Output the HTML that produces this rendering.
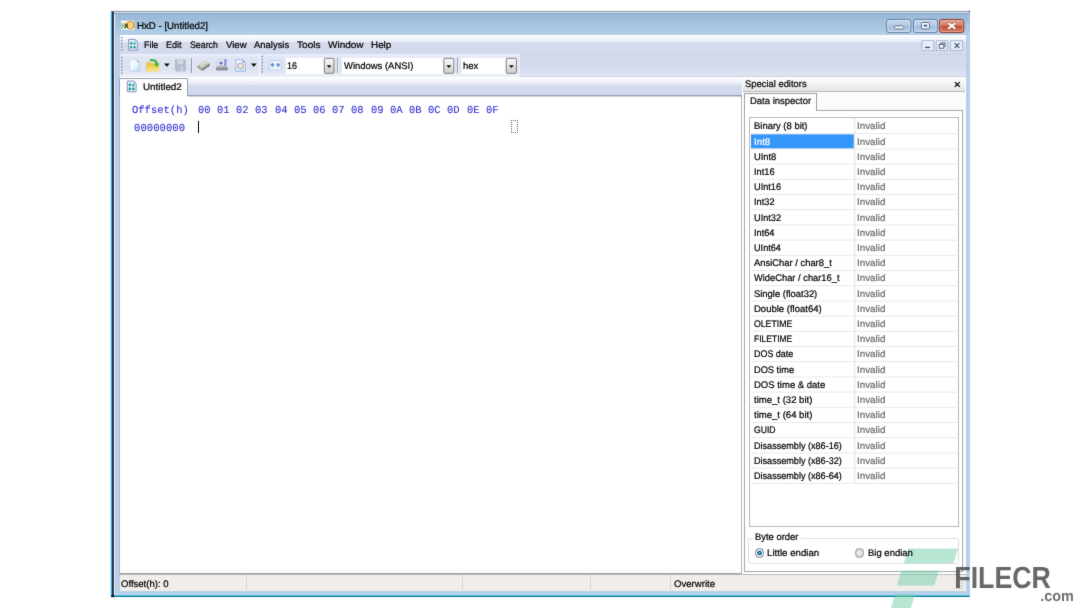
<!DOCTYPE html>
<html><head><meta charset="utf-8"><title>HxD - [Untitled2]</title>
<style>
html,body{margin:0;padding:0;}
body{width:1080px;height:608px;position:relative;overflow:hidden;background:#fff;font-family:"Liberation Sans",sans-serif;font-size:9.6px;}
#root{position:absolute;left:0;top:0;width:1080px;height:608px;filter:url(#soft);}
.a{position:absolute;box-sizing:border-box;}
.t{text-rendering:geometricPrecision;position:absolute;white-space:pre;transform-origin:0 50%;line-height:normal;-webkit-text-stroke:0.22px currentColor;}
svg{position:absolute;overflow:visible;text-rendering:geometricPrecision;}

</style></head>
<body>
<svg width="0" height="0" style="position:absolute"><filter id="soft" x="0" y="0" width="100%" height="100%" color-interpolation-filters="sRGB"><feConvolveMatrix order="3" kernelMatrix="0.012 0.068 0.012 0.068 0.68 0.068 0.012 0.068 0.012" divisor="1" edgeMode="duplicate" preserveAlpha="false"/></filter></svg>
<div id="root">
<!-- window frame -->
<div class="a" id="frame" style="left:111px;top:11px;width:858.6px;height:586px;background:#b7d0ea;"></div>
<div class="a" id="titlebar" style="left:114px;top:14px;width:855.6px;height:21px;background:linear-gradient(#99b8d7,#b3cfe8);"></div>
<!-- client -->
<div class="a" id="client" style="left:119.5px;top:35px;width:846px;height:556px;background:#fff;"></div>
<!-- menu bar -->
<div class="a" id="menubar" style="left:119.5px;top:35px;width:846px;height:19px;background:linear-gradient(#ffffff 0,#f3f5fc 20%,#e6eaf7 38%,#d5dbed 40%,#d4daec 100%);"></div>
<!-- toolbar row -->
<div class="a" id="tbrow" style="left:119.5px;top:54px;width:846px;height:22.6px;background:linear-gradient(#c9cedb 0,#d4daec 6%,#d5dbed 60%,#dfe4f4 94%,#c6cbd8 100%);"></div>
<div class="a" id="tbband" style="left:119.5px;top:54px;width:400px;height:23px;background:linear-gradient(#eef1fa 0,#e0e5f4 15%,#dde2f2 70%,#e8ecf8 92%,#f2f4fb 100%);border-right:1px solid #eef0f8;"></div>
<!-- tab strip -->
<div class="a" id="tabstrip" style="left:119.5px;top:77px;width:622px;height:19.5px;background:linear-gradient(#ffffff 0,#f1f3fb 22%,#e4e8f6 38%,#d5dbee 42%,#d2d8eb 91%,#989eb0 95%,#989eb0 100%);"></div>
<div class="a" id="tab" style="left:119px;top:77.5px;width:69px;height:19.5px;background:linear-gradient(#fdfdfe,#ffffff);border:1px solid #9aa2b6;border-bottom:none;border-radius:2px 2px 0 0;"></div>

<!-- editor -->
<div class="a" id="editor" style="left:119px;top:96.4px;width:622.6px;height:477px;background:#fff;border-left:1px solid #a9b5cc;border-right:1px solid #b4b4b8;"></div>
<div class="a" style="left:197.7px;top:120.7px;width:1.4px;height:12.2px;background:#000;"></div>
<div class="a" style="left:511px;top:120.4px;width:6.6px;height:13px;border:1px dotted #666;"></div>

<!-- side panel -->
<div class="a" id="sidehdr" style="left:742.5px;top:77px;width:222.3px;height:15px;background:linear-gradient(#ffffff,#f2f2f2 50%,#e4e4e4 100%);border-bottom:1px solid #b9b9b9;"></div>
<div class="a" id="sidebg" style="left:742.5px;top:92px;width:223px;height:481.5px;background:#fbfbfb;"></div>
<div class="a" id="tabpage" style="left:743.6px;top:110px;width:219.6px;height:462px;background:#fff;border:1px solid #a8a8a8;"></div>
<div class="a" id="sidetab" style="left:743.6px;top:93px;width:73.6px;height:18px;background:#fff;border:1px solid #a0a0a0;border-bottom:none;"></div>
<div class="a" id="listbox" style="left:749.3px;top:117px;width:210px;height:409.6px;background:#fff;border:1px solid #b8b8b8;"></div>
<!-- group box -->
<div class="a" id="group" style="left:748.4px;top:537.6px;width:210.6px;height:26px;border:1px solid #dfdfdf;border-radius:3px;"></div>
<div class="a" style="left:753.5px;top:536px;width:47px;height:4px;background:#fff;"></div>
<!-- radios -->
<div class="a" style="left:755px;top:548.4px;width:9.4px;height:9.4px;border-radius:50%;border:1px solid #7a7f86;background:radial-gradient(circle at 50% 50%,#7fd0f8 0,#1f7fb8 22%,#0c4a78 36%,#e9eef3 48%,#dde3e8 100%);"></div>
<div class="a" style="left:855px;top:548.4px;width:9.4px;height:9.4px;border-radius:50%;border:1px solid #8e9196;background:radial-gradient(circle at 50% 50%,#f4f4f4 0,#d6d6d6 70%,#c8c8c8 100%);"></div>

<!-- status bar -->
<div class="a" id="status" style="left:119.5px;top:573.4px;width:846px;height:17.6px;background:#f0edeb;"></div>
<div class="a" style="left:246.3px;top:576px;width:1px;height:14px;background:#d9d7d6;"></div>
<div class="a" style="left:462.4px;top:576px;width:1px;height:14px;background:#d9d7d6;"></div>
<div class="a" style="left:590.4px;top:576px;width:1px;height:14px;background:#d9d7d6;"></div>
<div class="a" style="left:670.1px;top:576px;width:1px;height:14px;background:#d9d7d6;"></div>

<svg class="ov" width="1080" height="608" viewBox="0 0 1080 608" style="left:0;top:0;pointer-events:none">
<defs>
<linearGradient id="gBtn" x1="0" y1="0" x2="0" y2="1"><stop offset="0" stop-color="#f6f6f6"/><stop offset="0.5" stop-color="#ebebeb"/><stop offset="0.55" stop-color="#dcdcdc"/><stop offset="1" stop-color="#cfcfcf"/></linearGradient>
<linearGradient id="gCap" x1="0" y1="0" x2="0" y2="1"><stop offset="0" stop-color="#c9dbee"/><stop offset="0.45" stop-color="#b4cce6"/><stop offset="0.5" stop-color="#a3bedc"/><stop offset="1" stop-color="#b9d2ea"/></linearGradient>
<linearGradient id="gClose" x1="0" y1="0" x2="0" y2="1"><stop offset="0" stop-color="#e3a99d"/><stop offset="0.45" stop-color="#d57e6a"/><stop offset="0.5" stop-color="#c34c34"/><stop offset="1" stop-color="#d8846c"/></linearGradient>
<linearGradient id="gDoc" x1="0" y1="0" x2="1" y2="1"><stop offset="0" stop-color="#ffffff"/><stop offset="0.5" stop-color="#eef6fc"/><stop offset="1" stop-color="#a9d4ee"/></linearGradient>
<linearGradient id="gFold" x1="0" y1="0" x2="0" y2="1"><stop offset="0" stop-color="#f2cf5a"/><stop offset="1" stop-color="#f9e79a"/></linearGradient>
</defs>

<!-- frame edges -->
<rect x="110.8" y="10.9" width="858.6" height="1" fill="#8a8a8a"/>
<rect x="114" y="11.9" width="855.6" height="1" fill="#e9f1f9"/>
<rect x="114" y="12.9" width="855.6" height="1.1" fill="#7fa4cd"/>
<rect x="110" y="11.6" width="1" height="585.4" fill="#d8effb"/>
<rect x="111" y="11.6" width="1" height="585.4" fill="#40a8d8"/>
<rect x="112" y="11.6" width="1" height="585.4" fill="#003a5c"/>
<rect x="113" y="11.6" width="1" height="585.4" fill="#4a4038"/>
<rect x="114" y="14" width="1" height="581" fill="#f0f0ff"/>
<rect x="115" y="14" width="1" height="581" fill="#b8c4ec"/>
<rect x="114.1" y="594.5" width="855.5" height="1.1" fill="#a6e2fd"/>
<rect x="112.4" y="595.6" width="857.2" height="1.4" fill="#00819a"/>
<rect x="111.2" y="595" width="3" height="2.2" fill="#101820"/>
<rect x="969" y="10.9" width="0.9" height="1.4" fill="#1a3050"/>
<rect x="188" y="95.2" width="553.5" height="1.25" fill="#8f95a8"/>
<rect x="119.5" y="573.1" width="622.3" height="1.5" fill="#969696"/>
<rect x="741.8" y="572.8" width="224" height="1.4" fill="#ffffff"/>
<rect x="741.8" y="574" width="224" height="1" fill="#bdbdbd"/>
<!-- list rows -->
<rect x="751" y="134.2" width="102.8" height="14.5" fill="#3596fa"/>
<rect x="750.4" y="133.20" width="208" height="1" fill="#e9e9e9"/>
<rect x="750.4" y="148.40" width="208" height="1" fill="#e9e9e9"/>
<rect x="750.4" y="163.60" width="208" height="1" fill="#e9e9e9"/>
<rect x="750.4" y="178.80" width="208" height="1" fill="#e9e9e9"/>
<rect x="750.4" y="194.00" width="208" height="1" fill="#e9e9e9"/>
<rect x="750.4" y="209.20" width="208" height="1" fill="#e9e9e9"/>
<rect x="750.4" y="224.40" width="208" height="1" fill="#e9e9e9"/>
<rect x="750.4" y="239.60" width="208" height="1" fill="#e9e9e9"/>
<rect x="750.4" y="254.80" width="208" height="1" fill="#e9e9e9"/>
<rect x="750.4" y="270.00" width="208" height="1" fill="#e9e9e9"/>
<rect x="750.4" y="285.20" width="208" height="1" fill="#e9e9e9"/>
<rect x="750.4" y="300.40" width="208" height="1" fill="#e9e9e9"/>
<rect x="750.4" y="315.60" width="208" height="1" fill="#e9e9e9"/>
<rect x="750.4" y="330.80" width="208" height="1" fill="#e9e9e9"/>
<rect x="750.4" y="346.00" width="208" height="1" fill="#e9e9e9"/>
<rect x="750.4" y="361.20" width="208" height="1" fill="#e9e9e9"/>
<rect x="750.4" y="376.40" width="208" height="1" fill="#e9e9e9"/>
<rect x="750.4" y="391.60" width="208" height="1" fill="#e9e9e9"/>
<rect x="750.4" y="406.80" width="208" height="1" fill="#e9e9e9"/>
<rect x="750.4" y="422.00" width="208" height="1" fill="#e9e9e9"/>
<rect x="750.4" y="437.20" width="208" height="1" fill="#e9e9e9"/>
<rect x="750.4" y="452.40" width="208" height="1" fill="#e9e9e9"/>
<rect x="750.4" y="467.60" width="208" height="1" fill="#e9e9e9"/>
<rect x="750.4" y="482.80" width="208" height="1" fill="#e9e9e9"/>
<rect x="854.2" y="118" width="1" height="365.6" fill="#e2e2e2"/>
<!-- title icon -->
<rect x="121" y="20.7" width="13" height="9" fill="#fbfbf6"/>
<circle cx="130.2" cy="25.2" r="4.1" fill="#e9981c"/>
<circle cx="130.2" cy="25.2" r="3" fill="#f6b43a"/>
<text x="121.2" y="28.6" font-family="'Liberation Sans',sans-serif" font-weight="bold" font-size="9.2" fill="#4c9c3c" textLength="4.6" lengthAdjust="spacingAndGlyphs">H</text>
<text x="124.6" y="28.4" font-family="'Liberation Sans',sans-serif" font-weight="bold" font-size="8" fill="#1a1a1a" textLength="4" lengthAdjust="spacingAndGlyphs">x</text>
<text x="128.2" y="28.2" font-family="'Liberation Sans',sans-serif" font-weight="bold" font-size="8" fill="#fff6e0" textLength="4.4" lengthAdjust="spacingAndGlyphs">D</text>

<!-- caption buttons -->
<rect x="886.6" y="19.4" width="24.2" height="13.2" rx="2.4" fill="url(#gCap)" stroke="#64809f" stroke-width="1"/>
<rect x="887.7" y="20.5" width="22" height="11" rx="1.6" fill="none" stroke="#dbe8f5" stroke-width="0.8" opacity="0.8"/>
<rect x="894.4" y="25.9" width="9.4" height="3" rx="1.3" fill="#fbfbfb" stroke="#55657c" stroke-width="0.9"/>
<rect x="913.5" y="19.4" width="23.8" height="13.2" rx="2.4" fill="url(#gCap)" stroke="#64809f" stroke-width="1"/>
<rect x="914.6" y="20.5" width="21.6" height="11" rx="1.6" fill="none" stroke="#dbe8f5" stroke-width="0.8" opacity="0.8"/>
<rect x="921.4" y="22.5" width="8" height="6.4" rx="0.8" fill="#fbfbfb" stroke="#55657c" stroke-width="0.9"/>
<rect x="923.6" y="24.7" width="3.6" height="1.9" fill="#3a58a8"/>
<rect x="939.6" y="19.4" width="24.2" height="13.2" rx="2.4" fill="url(#gClose)" stroke="#8c3a30" stroke-width="1"/>
<rect x="940.7" y="20.5" width="22" height="11" rx="1.6" fill="none" stroke="#f0b8a8" stroke-width="0.8" opacity="0.7"/>
<path d="M948.7 23.5 L954.9 28.4 M954.9 23.5 L948.7 28.4" stroke="#5a3028" stroke-width="3.2" stroke-linecap="round" fill="none" opacity="0.55"/>
<path d="M948.7 23.5 L954.9 28.4 M954.9 23.5 L948.7 28.4" stroke="#ffffff" stroke-width="2" stroke-linecap="round" fill="none"/>

<!-- MDI buttons -->
<rect x="922" y="40.6" width="11.7" height="9.8" fill="#e6eefa" stroke="#a9b8d2" stroke-width="0.9"/>
<rect x="925" y="46.8" width="5" height="1.3" fill="#444e66"/>
<rect x="936.3" y="40.6" width="11.3" height="9.8" fill="#e6eefa" stroke="#a9b8d2" stroke-width="0.9"/>
<path d="M940.8 44 V42.8 H945.2 V46.6 H944.2" fill="none" stroke="#4a546c" stroke-width="0.9"/>
<rect x="939.2" y="44.4" width="4.6" height="3.8" fill="#f4f8fe" stroke="#4a546c" stroke-width="0.9"/>
<rect x="950.6" y="40.6" width="12" height="9.8" fill="#e6eefa" stroke="#a9b8d2" stroke-width="0.9"/>
<path d="M954.6 43.1 L959.4 48 M959.4 43.1 L954.6 48" stroke="#444e66" stroke-width="1.1" fill="none"/>

<!-- grippers -->
<g fill="#8a90a6">
<circle cx="121.8" cy="37.6" r="0.85"/><circle cx="121.8" cy="40.7" r="0.85"/><circle cx="121.8" cy="43.8" r="0.85"/><circle cx="121.8" cy="46.9" r="0.85"/><circle cx="121.8" cy="50" r="0.85"/>
<circle cx="121.8" cy="57.6" r="0.85"/><circle cx="121.8" cy="60.7" r="0.85"/><circle cx="121.8" cy="63.8" r="0.85"/><circle cx="121.8" cy="66.9" r="0.85"/><circle cx="121.8" cy="70" r="0.85"/><circle cx="121.8" cy="73.1" r="0.85"/>
<circle cx="262.2" cy="56.4" r="0.85"/><circle cx="262.2" cy="59.5" r="0.85"/><circle cx="262.2" cy="62.6" r="0.85"/><circle cx="262.2" cy="65.7" r="0.85"/><circle cx="262.2" cy="68.8" r="0.85"/><circle cx="262.2" cy="71.9" r="0.85"/>
</g>
<rect x="259.3" y="55" width="1" height="21" fill="#f3f5fb"/>

<!-- menu doc icon -->
<path d="M128.6 39.4 H135 L137.4 41.8 V50.2 H128.6 Z" fill="#dff2f8" stroke="#8a82c6" stroke-width="0.9" stroke-linejoin="round"/>
<path d="M135 39.4 V41.8 H137.4 Z" fill="#7fb4e6"/>
<rect x="130" y="42" width="2.4" height="2.6" rx="0.8" fill="#1f9f8c"/><rect x="133.4" y="42.4" width="2.2" height="2.4" rx="0.8" fill="#1f9f8c"/>
<rect x="130" y="46" width="2.4" height="2.6" rx="0.8" fill="#1f9f8c"/><rect x="133.4" y="46" width="2.4" height="2.6" rx="0.8" fill="#1f9f8c"/>
<!-- tab doc icon -->
<g transform="translate(-1.3,41.6)">
<path d="M128.6 39.4 H135 L137.4 41.8 V50.2 H128.6 Z" fill="#dff2f8" stroke="#8a82c6" stroke-width="0.9" stroke-linejoin="round"/>
<path d="M135 39.4 V41.8 H137.4 Z" fill="#7fb4e6"/>
<rect x="130" y="42" width="2.4" height="2.6" rx="0.8" fill="#1f9f8c"/><rect x="133.4" y="42.4" width="2.2" height="2.4" rx="0.8" fill="#1f9f8c"/>
<rect x="130" y="46" width="2.4" height="2.6" rx="0.8" fill="#1f9f8c"/><rect x="133.4" y="46" width="2.4" height="2.6" rx="0.8" fill="#1f9f8c"/>
</g>

<!-- toolbar: new doc -->
<path d="M130 59.7 H137.2 L139.8 62.3 V71.4 H130 Z" fill="url(#gDoc)" stroke="#bfd0e4" stroke-width="0.7"/>
<path d="M137.2 59.7 V62.3 H139.8 Z" fill="#6fb2e6"/>
<!-- open folder -->
<path d="M146.2 63 Q146.2 62 147.2 62 H150.4 L151.6 63.4 H157.4 Q158.4 63.4 158.4 64.4 V70.6 Q158.4 71.6 157.4 71.6 H147.2 Q146.2 71.6 146.2 70.6 Z" fill="#eec648"/>
<path d="M147.6 66 H159.2 Q160 66 159.7 66.9 L158.4 70.8 Q158.1 71.7 157.2 71.7 H146.6 Z" fill="url(#gFold)"/>
<path d="M150.6 60.2 Q156.4 59.4 157 64.2" fill="none" stroke="#46b83a" stroke-width="2.2" stroke-linecap="round"/>
<path d="M153.8 63.6 H159.8 L156.8 67.2 Z" fill="#46b83a"/>
<!-- arrow -->
<path d="M164 63.5 H169.8 L166.9 66.7 Z" fill="#0a0a0a"/>
<!-- save (disabled) -->
<path d="M175 60.4 Q175 59.6 175.8 59.6 H185 Q185.8 59.6 185.8 60.4 V70.6 Q185.8 71.4 185 71.4 H176.4 L175 70 Z" fill="#b4b9c9"/>
<rect x="177.2" y="59.6" width="6.4" height="4.6" fill="#d3d7e3"/>
<rect x="177.6" y="66.6" width="5.8" height="4.8" fill="#ccd0dd"/>
<rect x="178.4" y="67.4" width="1.8" height="3.4" fill="#aeb3c4"/>
<!-- separator -->
<rect x="191" y="58.2" width="1" height="14.8" fill="#8e95ab"/>
<rect x="192" y="58.2" width="0.8" height="14.8" fill="#eef0f8"/>
<!-- chip -->
<path d="M197.4 65.6 L205.4 60.5 L209.9 63.6 L201.8 68.9 Z" fill="#c2c2b2"/>
<path d="M197.4 65.6 L201.8 68.9 V70.6 L197.4 67.2 Z" fill="#8a8a7c"/>
<path d="M201.8 68.9 L209.9 63.6 V65.2 L201.8 70.6 Z" fill="#6f7078"/>
<path d="M199.2 64.9 L205.6 61 L208 62.6 L201.6 66.7 Z" fill="#d9d9cc"/><path d="M202.6 70.4 L209.6 65.8" stroke="#55565e" stroke-width="1" stroke-dasharray="1 1.1" fill="none"/>
<!-- drive/disc -->
<circle cx="221" cy="63" r="4.3" fill="#e4e4f4" stroke="#c4c4dc" stroke-width="0.6"/>
<circle cx="221" cy="63" r="1.5" fill="#5a62d8"/>
<path d="M224.6 59 L226.6 59.4 L226.2 66 L224.2 66 Z" fill="#7f86e0"/>
<path d="M216 67.6 L218 65.8 H226 L227.8 67.6 V69.6 Q227.8 70.4 227 70.4 H216.8 Q216 70.4 216 69.6 Z" fill="#8d9196"/>
<path d="M218 65.8 H226 L227.8 67.6 H216 Z" fill="#b9bcc0"/>
<!-- doc with disc -->
<path d="M235.8 59.6 H242.6 L245.4 62.4 V71.2 H235.8 Z" fill="#f4f6fc" stroke="#a4a4e2" stroke-width="0.9"/>
<path d="M242.6 59.6 V62.4 H245.4 Z" fill="#5aa6e6"/>
<circle cx="240.6" cy="66" r="3.2" fill="#dcd6d2" stroke="#a89c94" stroke-width="0.7"/>
<circle cx="240.6" cy="66" r="1.1" fill="#f8f8ff"/>
<rect x="236.4" y="69.8" width="8.4" height="1.2" fill="#a8e6ee"/>
<!-- arrow -->
<path d="M250.8 63.5 H256.8 L253.8 66.7 Z" fill="#0a0a0a"/>

<!-- ++ icon -->
<rect x="269" y="60.4" width="12.3" height="9.8" rx="1.4" fill="#e9f0fa" stroke="#b9c9e8" stroke-width="0.8"/>
<path d="M270.6 64.9 H274.2 M272.4 63.1 V66.7 M276.4 64.9 H280 M278.2 63.1 V66.7" stroke="#4a86cc" stroke-width="1.3" fill="none"/>

<!-- combos -->
<rect x="285.8" y="57.7" width="48.4" height="16.4" fill="#ffffff"/>
<rect x="324.3" y="58.3" width="9.6" height="15" rx="0.9" fill="url(#gBtn)" stroke="#6f6f6f" stroke-width="0.9"/>
<path d="M326.7 65.2 H331.5 L329.1 67.9 Z" fill="#0a0a0a"/>
<rect x="337.2" y="58.2" width="1" height="14.8" fill="#9aa0b6"/>
<rect x="338.2" y="58.2" width="0.8" height="14.8" fill="#eef0f8"/>
<rect x="341.8" y="57.7" width="112.8" height="16.4" fill="#ffffff"/>
<rect x="443.8" y="58.3" width="10" height="15" rx="0.9" fill="url(#gBtn)" stroke="#6f6f6f" stroke-width="0.9"/>
<path d="M446.4 65.2 H451.2 L448.8 67.9 Z" fill="#0a0a0a"/>
<rect x="457" y="58.2" width="1" height="14.8" fill="#9aa0b6"/>
<rect x="458" y="58.2" width="0.8" height="14.8" fill="#eef0f8"/>
<rect x="461" y="57.7" width="56.2" height="16.4" fill="#ffffff"/>
<rect x="506.2" y="58.3" width="10.2" height="15" rx="0.9" fill="url(#gBtn)" stroke="#6f6f6f" stroke-width="0.9"/>
<path d="M508.9 65.2 H513.9 L511.4 67.9 Z" fill="#0a0a0a"/>

<!-- side panel close x -->
<path d="M954.8 82.1 L959.8 86.8 M959.8 82.1 L954.8 86.8" stroke="#0a0a0a" stroke-width="1.25" fill="none"/>

<!-- status grip -->
<g fill="#b4b2b0"><rect x="961.4" y="587.6" width="1.3" height="1.3"/><rect x="961.4" y="585" width="1.3" height="1.3"/><rect x="958.8" y="587.6" width="1.3" height="1.3"/><rect x="961.4" y="582.4" width="1.3" height="1.3"/><rect x="958.8" y="585" width="1.3" height="1.3"/><rect x="956.2" y="587.6" width="1.3" height="1.3"/></g>

<!-- watermark -->
<g fill="#6fd0a8" fill-opacity="0.5">
<path d="M908.4 548.5 H958 L953.4 563.3 H903.8 Z"/>
<path d="M901.4 570.4 H939 L934.3 585.6 H896.7 Z"/>
<path d="M895.3 593.9 H915.2 L910.8 608 H890.9 Z"/>
</g>
<text x="954.3" y="588" font-family="'Liberation Sans',sans-serif" font-weight="bold" font-size="30.6" fill="#4e4e4e" fill-opacity="0.86" textLength="96.6" lengthAdjust="spacingAndGlyphs">FILECR</text>
<text x="1040.2" y="601.2" font-family="'Liberation Sans',sans-serif" font-weight="bold" font-size="15.2" fill="#4e4e4e" fill-opacity="0.82" textLength="33.6" lengthAdjust="spacingAndGlyphs">.com</text>
</svg>

<span class="t" id="l0" style="left:136.90px;top:21.30px;font-size:9.8px;color:#000;font-family:'Liberation Sans', sans-serif;transform:scaleX(0.9878);">HxD - [Untitled2]</span>
<span class="t" id="l1" style="left:144.30px;top:40.30px;font-size:9.6px;color:#000;font-family:'Liberation Sans', sans-serif;transform:scaleX(0.9244);">File</span>
<span class="t" id="l2" style="left:166.40px;top:40.30px;font-size:9.6px;color:#000;font-family:'Liberation Sans', sans-serif;transform:scaleX(0.9367);">Edit</span>
<span class="t" id="l3" style="left:190.40px;top:40.30px;font-size:9.6px;color:#000;font-family:'Liberation Sans', sans-serif;transform:scaleX(0.9176);">Search</span>
<span class="t" id="l4" style="left:225.90px;top:40.30px;font-size:9.6px;color:#000;font-family:'Liberation Sans', sans-serif;transform:scaleX(0.9988);">View</span>
<span class="t" id="l5" style="left:253.80px;top:40.30px;font-size:9.6px;color:#000;font-family:'Liberation Sans', sans-serif;transform:scaleX(0.9850);">Analysis</span>
<span class="t" id="l6" style="left:296.80px;top:40.30px;font-size:9.6px;color:#000;font-family:'Liberation Sans', sans-serif;transform:scaleX(1.0488);">Tools</span>
<span class="t" id="l7" style="left:327.60px;top:40.30px;font-size:9.6px;color:#000;font-family:'Liberation Sans', sans-serif;transform:scaleX(1.0432);">Window</span>
<span class="t" id="l8" style="left:371.10px;top:40.30px;font-size:9.6px;color:#000;font-family:'Liberation Sans', sans-serif;transform:scaleX(1.0287);">Help</span>
<span class="t" id="l9" style="left:287.20px;top:60.60px;font-size:9.6px;color:#000;font-family:'Liberation Sans', sans-serif;transform:scaleX(0.9277);">16</span>
<span class="t" id="l10" style="left:343.50px;top:60.60px;font-size:9.6px;color:#000;font-family:'Liberation Sans', sans-serif;transform:scaleX(0.9847);">Windows (ANSI)</span>
<span class="t" id="l11" style="left:463.40px;top:60.60px;font-size:9.6px;color:#000;font-family:'Liberation Sans', sans-serif;transform:scaleX(0.9891);">hex</span>
<span class="t" id="l12" style="left:143.10px;top:81.80px;font-size:9.6px;color:#000;font-family:'Liberation Sans', sans-serif;transform:scaleX(1.0244);">Untitled2</span>
<span class="t" id="l13" style="left:744.80px;top:79.30px;font-size:9.6px;color:#000;font-family:'Liberation Sans', sans-serif;transform:scaleX(0.9787);">Special editors</span>
<span class="t" id="l14" style="left:749.80px;top:96.40px;font-size:9.6px;color:#000;font-family:'Liberation Sans', sans-serif;transform:scaleX(0.9877);">Data inspector</span>
<span class="t" id="l15" style="left:753.90px;top:121.30px;font-size:9.6px;color:#000;font-family:'Liberation Sans', sans-serif;transform:scaleX(0.9836);">Binary (8 bit)</span>
<span class="t" id="l16" style="left:857.40px;top:121.30px;font-size:9.6px;color:#6c6c70;font-family:'Liberation Sans', sans-serif;transform:scaleX(1.0240);">Invalid</span>
<span class="t" id="l17" style="left:753.90px;top:136.50px;font-size:9.6px;color:#fff;font-family:'Liberation Sans', sans-serif;transform:scaleX(1.0178);">Int8</span>
<span class="t" id="l18" style="left:857.40px;top:136.50px;font-size:9.6px;color:#6c6c70;font-family:'Liberation Sans', sans-serif;transform:scaleX(1.0240);">Invalid</span>
<span class="t" id="l19" style="left:753.90px;top:151.70px;font-size:9.6px;color:#000;font-family:'Liberation Sans', sans-serif;transform:scaleX(0.9722);">UInt8</span>
<span class="t" id="l20" style="left:857.40px;top:151.70px;font-size:9.6px;color:#6c6c70;font-family:'Liberation Sans', sans-serif;transform:scaleX(1.0240);">Invalid</span>
<span class="t" id="l21" style="left:753.90px;top:166.90px;font-size:9.6px;color:#000;font-family:'Liberation Sans', sans-serif;transform:scaleX(0.9652);">Int16</span>
<span class="t" id="l22" style="left:857.40px;top:166.90px;font-size:9.6px;color:#6c6c70;font-family:'Liberation Sans', sans-serif;transform:scaleX(1.0240);">Invalid</span>
<span class="t" id="l23" style="left:753.90px;top:182.10px;font-size:9.6px;color:#000;font-family:'Liberation Sans', sans-serif;transform:scaleX(0.9582);">UInt16</span>
<span class="t" id="l24" style="left:857.40px;top:182.10px;font-size:9.6px;color:#6c6c70;font-family:'Liberation Sans', sans-serif;transform:scaleX(1.0240);">Invalid</span>
<span class="t" id="l25" style="left:753.90px;top:197.30px;font-size:9.6px;color:#000;font-family:'Liberation Sans', sans-serif;transform:scaleX(0.9652);">Int32</span>
<span class="t" id="l26" style="left:857.40px;top:197.30px;font-size:9.6px;color:#6c6c70;font-family:'Liberation Sans', sans-serif;transform:scaleX(1.0240);">Invalid</span>
<span class="t" id="l27" style="left:753.90px;top:212.50px;font-size:9.6px;color:#000;font-family:'Liberation Sans', sans-serif;transform:scaleX(0.9582);">UInt32</span>
<span class="t" id="l28" style="left:857.40px;top:212.50px;font-size:9.6px;color:#6c6c70;font-family:'Liberation Sans', sans-serif;transform:scaleX(1.0240);">Invalid</span>
<span class="t" id="l29" style="left:753.90px;top:227.70px;font-size:9.6px;color:#000;font-family:'Liberation Sans', sans-serif;transform:scaleX(0.9605);">Int64</span>
<span class="t" id="l30" style="left:857.40px;top:227.70px;font-size:9.6px;color:#6c6c70;font-family:'Liberation Sans', sans-serif;transform:scaleX(1.0240);">Invalid</span>
<span class="t" id="l31" style="left:753.90px;top:242.90px;font-size:9.6px;color:#000;font-family:'Liberation Sans', sans-serif;transform:scaleX(0.9512);">UInt64</span>
<span class="t" id="l32" style="left:857.40px;top:242.90px;font-size:9.6px;color:#6c6c70;font-family:'Liberation Sans', sans-serif;transform:scaleX(1.0240);">Invalid</span>
<span class="t" id="l33" style="left:753.90px;top:258.10px;font-size:9.6px;color:#000;font-family:'Liberation Sans', sans-serif;transform:scaleX(0.9792);">AnsiChar / char8_t</span>
<span class="t" id="l34" style="left:857.40px;top:258.10px;font-size:9.6px;color:#6c6c70;font-family:'Liberation Sans', sans-serif;transform:scaleX(1.0240);">Invalid</span>
<span class="t" id="l35" style="left:753.90px;top:273.30px;font-size:9.6px;color:#000;font-family:'Liberation Sans', sans-serif;transform:scaleX(0.9718);">WideChar / char16_t</span>
<span class="t" id="l36" style="left:857.40px;top:273.30px;font-size:9.6px;color:#6c6c70;font-family:'Liberation Sans', sans-serif;transform:scaleX(1.0240);">Invalid</span>
<span class="t" id="l37" style="left:753.90px;top:288.50px;font-size:9.6px;color:#000;font-family:'Liberation Sans', sans-serif;transform:scaleX(0.9801);">Single (float32)</span>
<span class="t" id="l38" style="left:857.40px;top:288.50px;font-size:9.6px;color:#6c6c70;font-family:'Liberation Sans', sans-serif;transform:scaleX(1.0240);">Invalid</span>
<span class="t" id="l39" style="left:753.90px;top:303.70px;font-size:9.6px;color:#000;font-family:'Liberation Sans', sans-serif;transform:scaleX(0.9917);">Double (float64)</span>
<span class="t" id="l40" style="left:857.40px;top:303.70px;font-size:9.6px;color:#6c6c70;font-family:'Liberation Sans', sans-serif;transform:scaleX(1.0240);">Invalid</span>
<span class="t" id="l41" style="left:753.90px;top:318.90px;font-size:9.6px;color:#000;font-family:'Liberation Sans', sans-serif;transform:scaleX(0.9080);">OLETIME</span>
<span class="t" id="l42" style="left:857.40px;top:318.90px;font-size:9.6px;color:#6c6c70;font-family:'Liberation Sans', sans-serif;transform:scaleX(1.0240);">Invalid</span>
<span class="t" id="l43" style="left:753.90px;top:334.10px;font-size:9.6px;color:#000;font-family:'Liberation Sans', sans-serif;transform:scaleX(0.8857);">FILETIME</span>
<span class="t" id="l44" style="left:857.40px;top:334.10px;font-size:9.6px;color:#6c6c70;font-family:'Liberation Sans', sans-serif;transform:scaleX(1.0240);">Invalid</span>
<span class="t" id="l45" style="left:753.90px;top:349.30px;font-size:9.6px;color:#000;font-family:'Liberation Sans', sans-serif;transform:scaleX(0.9302);">DOS date</span>
<span class="t" id="l46" style="left:857.40px;top:349.30px;font-size:9.6px;color:#6c6c70;font-family:'Liberation Sans', sans-serif;transform:scaleX(1.0240);">Invalid</span>
<span class="t" id="l47" style="left:753.90px;top:364.50px;font-size:9.6px;color:#000;font-family:'Liberation Sans', sans-serif;transform:scaleX(0.9641);">DOS time</span>
<span class="t" id="l48" style="left:857.40px;top:364.50px;font-size:9.6px;color:#6c6c70;font-family:'Liberation Sans', sans-serif;transform:scaleX(1.0240);">Invalid</span>
<span class="t" id="l49" style="left:753.90px;top:379.70px;font-size:9.6px;color:#000;font-family:'Liberation Sans', sans-serif;transform:scaleX(0.9905);">DOS time &amp; date</span>
<span class="t" id="l50" style="left:857.40px;top:379.70px;font-size:9.6px;color:#6c6c70;font-family:'Liberation Sans', sans-serif;transform:scaleX(1.0240);">Invalid</span>
<span class="t" id="l51" style="left:753.90px;top:394.90px;font-size:9.6px;color:#000;font-family:'Liberation Sans', sans-serif;transform:scaleX(0.9956);">time_t (32 bit)</span>
<span class="t" id="l52" style="left:857.40px;top:394.90px;font-size:9.6px;color:#6c6c70;font-family:'Liberation Sans', sans-serif;transform:scaleX(1.0240);">Invalid</span>
<span class="t" id="l53" style="left:753.90px;top:410.10px;font-size:9.6px;color:#000;font-family:'Liberation Sans', sans-serif;transform:scaleX(0.9956);">time_t (64 bit)</span>
<span class="t" id="l54" style="left:857.40px;top:410.10px;font-size:9.6px;color:#6c6c70;font-family:'Liberation Sans', sans-serif;transform:scaleX(1.0240);">Invalid</span>
<span class="t" id="l55" style="left:753.90px;top:425.30px;font-size:9.6px;color:#000;font-family:'Liberation Sans', sans-serif;transform:scaleX(0.9006);">GUID</span>
<span class="t" id="l56" style="left:857.40px;top:425.30px;font-size:9.6px;color:#6c6c70;font-family:'Liberation Sans', sans-serif;transform:scaleX(1.0240);">Invalid</span>
<span class="t" id="l57" style="left:753.90px;top:440.50px;font-size:9.6px;color:#000;font-family:'Liberation Sans', sans-serif;transform:scaleX(0.9463);">Disassembly (x86-16)</span>
<span class="t" id="l58" style="left:857.40px;top:440.50px;font-size:9.6px;color:#6c6c70;font-family:'Liberation Sans', sans-serif;transform:scaleX(1.0240);">Invalid</span>
<span class="t" id="l59" style="left:753.90px;top:455.70px;font-size:9.6px;color:#000;font-family:'Liberation Sans', sans-serif;transform:scaleX(0.9463);">Disassembly (x86-32)</span>
<span class="t" id="l60" style="left:857.40px;top:455.70px;font-size:9.6px;color:#6c6c70;font-family:'Liberation Sans', sans-serif;transform:scaleX(1.0240);">Invalid</span>
<span class="t" id="l61" style="left:753.90px;top:470.90px;font-size:9.6px;color:#000;font-family:'Liberation Sans', sans-serif;transform:scaleX(0.9463);">Disassembly (x86-64)</span>
<span class="t" id="l62" style="left:857.40px;top:470.90px;font-size:9.6px;color:#6c6c70;font-family:'Liberation Sans', sans-serif;transform:scaleX(1.0240);">Invalid</span>
<span class="t" id="l63" style="left:755.30px;top:532.30px;font-size:9.6px;color:#000;font-family:'Liberation Sans', sans-serif;transform:scaleX(0.9804);">Byte order</span>
<span class="t" id="l64" style="left:767.20px;top:548.40px;font-size:9.6px;color:#000;font-family:'Liberation Sans', sans-serif;transform:scaleX(1.0087);">Little endian</span>
<span class="t" id="l65" style="left:867.90px;top:548.40px;font-size:9.6px;color:#000;font-family:'Liberation Sans', sans-serif;transform:scaleX(0.9902);">Big endian</span>
<span class="t" id="l66" style="left:120.90px;top:579.00px;font-size:9.6px;color:#000;font-family:'Liberation Sans', sans-serif;transform:scaleX(0.9935);">Offset(h): 0</span>
<span class="t" id="l67" style="left:673.90px;top:579.00px;font-size:9.6px;color:#000;font-family:'Liberation Sans', sans-serif;transform:scaleX(0.9989);">Overwrite</span>
<span class="t" id="l68" style="left:131.60px;top:104.70px;font-size:10.6px;color:#2f2fd0;font-family:'Liberation Mono', monospace;transform:scaleX(0.9927);-webkit-text-stroke:0.08px currentColor;">Offset(h)</span>
<span class="t" id="l69" style="left:197.70px;top:104.70px;font-size:10.6px;color:#2f2fd0;font-family:'Liberation Mono', monospace;transform:scaleX(0.9907);-webkit-text-stroke:0.08px currentColor;">00</span>
<span class="t" id="l70" style="left:216.90px;top:104.70px;font-size:10.6px;color:#2f2fd0;font-family:'Liberation Mono', monospace;transform:scaleX(0.9907);-webkit-text-stroke:0.08px currentColor;">01</span>
<span class="t" id="l71" style="left:236.10px;top:104.70px;font-size:10.6px;color:#2f2fd0;font-family:'Liberation Mono', monospace;transform:scaleX(0.9907);-webkit-text-stroke:0.08px currentColor;">02</span>
<span class="t" id="l72" style="left:255.30px;top:104.70px;font-size:10.6px;color:#2f2fd0;font-family:'Liberation Mono', monospace;transform:scaleX(0.9907);-webkit-text-stroke:0.08px currentColor;">03</span>
<span class="t" id="l73" style="left:274.50px;top:104.70px;font-size:10.6px;color:#2f2fd0;font-family:'Liberation Mono', monospace;transform:scaleX(0.9907);-webkit-text-stroke:0.08px currentColor;">04</span>
<span class="t" id="l74" style="left:293.70px;top:104.70px;font-size:10.6px;color:#2f2fd0;font-family:'Liberation Mono', monospace;transform:scaleX(0.9907);-webkit-text-stroke:0.08px currentColor;">05</span>
<span class="t" id="l75" style="left:312.90px;top:104.70px;font-size:10.6px;color:#2f2fd0;font-family:'Liberation Mono', monospace;transform:scaleX(0.9907);-webkit-text-stroke:0.08px currentColor;">06</span>
<span class="t" id="l76" style="left:332.10px;top:104.70px;font-size:10.6px;color:#2f2fd0;font-family:'Liberation Mono', monospace;transform:scaleX(0.9907);-webkit-text-stroke:0.08px currentColor;">07</span>
<span class="t" id="l77" style="left:351.30px;top:104.70px;font-size:10.6px;color:#2f2fd0;font-family:'Liberation Mono', monospace;transform:scaleX(0.9907);-webkit-text-stroke:0.08px currentColor;">08</span>
<span class="t" id="l78" style="left:370.50px;top:104.70px;font-size:10.6px;color:#2f2fd0;font-family:'Liberation Mono', monospace;transform:scaleX(0.9907);-webkit-text-stroke:0.08px currentColor;">09</span>
<span class="t" id="l79" style="left:389.70px;top:104.70px;font-size:10.6px;color:#2f2fd0;font-family:'Liberation Mono', monospace;transform:scaleX(0.9907);-webkit-text-stroke:0.08px currentColor;">0A</span>
<span class="t" id="l80" style="left:408.90px;top:104.70px;font-size:10.6px;color:#2f2fd0;font-family:'Liberation Mono', monospace;transform:scaleX(0.9907);-webkit-text-stroke:0.08px currentColor;">0B</span>
<span class="t" id="l81" style="left:428.10px;top:104.70px;font-size:10.6px;color:#2f2fd0;font-family:'Liberation Mono', monospace;transform:scaleX(0.9907);-webkit-text-stroke:0.08px currentColor;">0C</span>
<span class="t" id="l82" style="left:447.30px;top:104.70px;font-size:10.6px;color:#2f2fd0;font-family:'Liberation Mono', monospace;transform:scaleX(0.9907);-webkit-text-stroke:0.08px currentColor;">0D</span>
<span class="t" id="l83" style="left:466.50px;top:104.70px;font-size:10.6px;color:#2f2fd0;font-family:'Liberation Mono', monospace;transform:scaleX(0.9907);-webkit-text-stroke:0.08px currentColor;">0E</span>
<span class="t" id="l84" style="left:485.70px;top:104.70px;font-size:10.6px;color:#2f2fd0;font-family:'Liberation Mono', monospace;transform:scaleX(0.9907);-webkit-text-stroke:0.08px currentColor;">0F</span>
<span class="t" id="l85" style="left:133.80px;top:122.80px;font-size:10.6px;color:#2f2fd0;font-family:'Liberation Mono', monospace;transform:scaleX(1.0028);-webkit-text-stroke:0.08px currentColor;">00000000</span>
</div>
</body></html>
